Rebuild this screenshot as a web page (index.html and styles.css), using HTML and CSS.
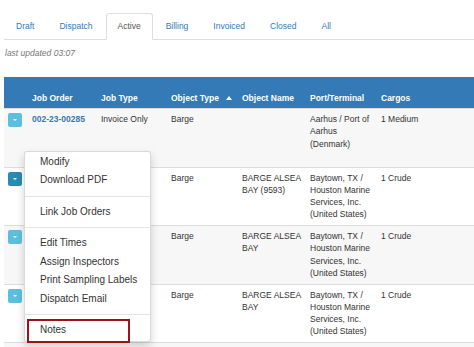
FILE: index.html
```html
<!DOCTYPE html>
<html lang="en">
<head>
  <meta charset="UTF-8" />
  <title>Job Orders</title>
  <link rel="stylesheet" href="styles.css">
</head>
<body>
  <div class="page">
    <ul class="tabs">
      <li><a>Draft</a></li>
      <li><a>Dispatch</a></li>
      <li class="active"><a>Active</a></li>
      <li><a>Billing</a></li>
      <li><a>Invoiced</a></li>
      <li><a>Closed</a></li>
      <li><a>All</a></li>
    </ul>

    <p class="updated">last updated 03:07</p>

    <table class="jobs">
      <colgroup>
        <col class="c-btn">
        <col class="c-order">
        <col class="c-type">
        <col class="c-obj">
        <col class="c-name">
        <col class="c-port">
        <col>
      </colgroup>
      <thead>
        <tr>
          <th></th>
          <th>Job Order</th>
          <th>Job Type</th>
          <th>Object Type <span class="sort"></span></th>
          <th>Object Name</th>
          <th>Port/Terminal</th>
          <th>Cargos</th>
        </tr>
      </thead>
      <tbody>
        <tr>
          <td><button class="caret-btn"></button></td>
          <td><a class="order">002-23-00285</a></td>
          <td>Invoice Only</td>
          <td>Barge</td>
          <td></td>
          <td>Aarhus / Port of Aarhus (Denmark)</td>
          <td>1 Medium</td>
        </tr>
        <tr>
          <td>
            <div class="dropdown">
              <button class="caret-btn open"></button>
              <ul class="menu">
                <li><a>Modify</a></li>
                <li><a>Download PDF</a></li>
                <li class="divider"></li>
                <li><a>Link Job Orders</a></li>
                <li class="divider"></li>
                <li><a>Edit Times</a></li>
                <li><a>Assign Inspectors</a></li>
                <li><a>Print Sampling Labels</a></li>
                <li><a>Dispatch Email</a></li>
                <li class="divider"></li>
                <li class="notes"><a>Notes</a></li>
              </ul>
            </div>
          </td>
          <td></td>
          <td></td>
          <td>Barge</td>
          <td>BARGE ALSEA BAY (9593)</td>
          <td>Baytown, TX / Houston Marine Services, Inc. (United States)</td>
          <td>1 Crude</td>
        </tr>
        <tr>
          <td><button class="caret-btn"></button></td>
          <td></td>
          <td></td>
          <td>Barge</td>
          <td>BARGE ALSEA BAY</td>
          <td>Baytown, TX / Houston Marine Services, Inc. (United States)</td>
          <td>1 Crude</td>
        </tr>
        <tr>
          <td><button class="caret-btn"></button></td>
          <td></td>
          <td></td>
          <td>Barge</td>
          <td>BARGE ALSEA BAY</td>
          <td>Baytown, TX / Houston Marine Services, Inc. (United States)</td>
          <td>1 Crude</td>
        </tr>
        <tr>
          <td><button class="caret-btn"></button></td>
          <td></td>
          <td></td>
          <td></td>
          <td></td>
          <td></td>
          <td></td>
        </tr>
      </tbody>
    </table>
  </div>
</body>
</html>
```

FILE: styles.css
```css
html,
body {
  height: 100%;
  overflow: hidden;
}

body {
  margin: 0;
  font-family: "Liberation Sans", Arial, sans-serif;
  color: #333;
  background: #fff;
}

.page {
  padding-left: 4px;
}

/* tabs */
.tabs {
  display: flex;
  list-style: none;
  margin: 13px 0 0;
  padding: 0;
  border-bottom: 1px solid #ddd;
}

.tabs li {
  margin-right: 1px;
  margin-bottom: -1px;
}

.tabs a {
  display: block;
  padding: 6px 11px;
  line-height: 13px;
  font-size: 8.5px;
  color: #337ab7;
  border: 1px solid transparent;
  border-radius: 3px 3px 0 0;
}

.tabs .active a {
  color: #555;
  background: #fff;
  border-color: #ddd #ddd transparent;
}

.updated {
  margin: 7px 0 18px 1px;
  font-size: 8.5px;
  line-height: 12px;
  font-style: italic;
  color: #777;
}

/* table */
.jobs {
  width: 470px;
  border-collapse: collapse;
  table-layout: fixed;
  font-size: 8.5px;
  line-height: 12.25px;
}

.c-btn { width: 23px; }
.c-order { width: 69px; }
.c-type { width: 70px; }
.c-obj { width: 71px; }
.c-name { width: 68px; }
.c-port { width: 71px; }

.jobs th {
  background: #337ab7;
  color: #fff;
  font-weight: bold;
  text-align: left;
  vertical-align: bottom;
  padding: 15px 1px 4px 5px;
  line-height: 12px;
  white-space: nowrap;
}

.sort {
  display: inline-block;
  margin-left: 5px;
  width: 0;
  height: 0;
  border-left: 3.5px solid transparent;
  border-right: 3.5px solid transparent;
  border-bottom: 4px solid #fff;
  vertical-align: 1px;
}

.jobs td {
  vertical-align: top;
  padding: 4px 1px 4px 5px;
  height: 49.5px;
  border-top: 1px solid #ddd;
}

.jobs td:first-child {
  padding-left: 4px;
  padding-right: 0;
}

.jobs tbody tr:nth-child(odd) td {
  background: #f7f7f7;
}

.order {
  color: #337ab7;
  font-weight: bold;
}

.caret-btn {
  display: block;
  position: relative;
  width: 14px;
  height: 14px;
  padding: 0;
  border: none;
  border-radius: 2px;
  background: #5bc0de;
}

.caret-btn::after {
  content: "";
  position: absolute;
  left: 4.5px;
  top: 6px;
  border-left: 2.5px solid transparent;
  border-right: 2.5px solid transparent;
  border-top: 2.5px solid #fff;
}

.caret-btn.open {
  background: #2a8ab0;
}

/* dropdown */
.dropdown {
  position: relative;
}

.menu {
  position: absolute;
  top: -21px;
  left: 16px;
  z-index: 5;
  width: 125px;
  margin: 0;
  padding: 1px 0;
  list-style: none;
  background: #fff;
  border: 1px solid rgba(0, 0, 0, 0.15);
  border-radius: 3px;
  box-shadow: 0 4px 9px rgba(0, 0, 0, 0.175);
}

.menu a {
  display: block;
  padding: 3px 15px;
  font-size: 10px;
  line-height: 12.5px;
  color: #333;
  white-space: nowrap;
}

.menu .divider {
  height: 1px;
  margin: 6px 0;
  background: #e5e5e5;
}

.menu .notes {
  position: relative;
}

.menu .notes::after {
  content: "";
  position: absolute;
  left: 2px;
  top: -2px;
  width: 103px;
  height: 24px;
  border: 2px solid #9e1219;
  box-sizing: border-box;
}
```
